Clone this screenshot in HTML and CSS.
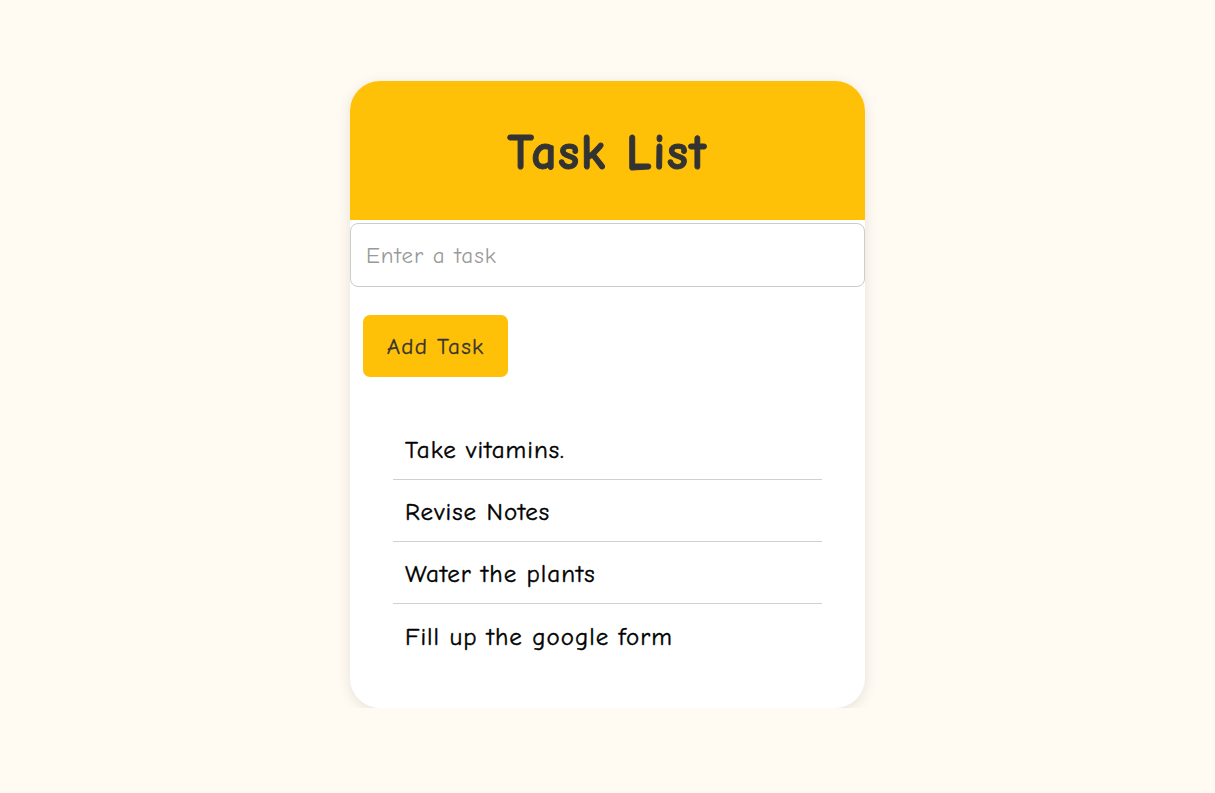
FILE: index.html
```html
<!DOCTYPE html>
<html lang="en">
<head>
<meta charset="utf-8">
<title>Task List</title>
<link rel="stylesheet" href="styles.css">
</head>
<body>
<div class="card">
  <header class="card-header">
    <h1 class="title">Task List</h1>
  </header>
  <input class="task-input" type="text" placeholder="Enter a task">
  <div class="actions">
    <button class="add-btn" type="button">Add Task</button>
  </div>
  <ul class="task-list">
    <li class="task">Take vitamins.</li>
    <li class="task">Revise Notes</li>
    <li class="task">Water the plants</li>
    <li class="task">Fill up the google form</li>
  </ul>
</div>
</body>
</html>
```

FILE: styles.css
```css
html, body {
  margin: 0;
  padding: 0;
}
body {
  background: #fffaf2;
  font-family: "Comic Sans MS", "Comic Neue", "Open Sans", sans-serif;
  padding-top: 81px;
}
.card {
  width: 515px;
  margin: 0 auto;
  background: #ffffff;
  border-radius: 30px;
  box-shadow: 0 3px 14px rgba(0, 0, 0, 0.1);
  overflow: hidden;
  padding-bottom: 42px;
}
.card-header {
  background: #ffc107;
  height: 139px;
  display: flex;
  align-items: center;
  justify-content: center;
}
.title {
  margin: 4px 0 0 0;
  font-size: 50px;
  font-weight: 700;
  color: #333333;
  letter-spacing: 1.5px;
  -webkit-text-stroke: 1px #333333;
}
.task-input {
  display: block;
  box-sizing: border-box;
  width: 100%;
  height: 64px;
  margin: 3px 0 0 0;
  padding: 0 15px;
  border: 1px solid #cccccc;
  border-radius: 8px;
  font-family: inherit;
  font-size: 23px;
  letter-spacing: 1px;
  color: #333333;
  outline: none;
}
.task-input::placeholder {
  color: #999999;
}
.actions {
  padding: 28px 13px 0;
}
.add-btn {
  width: 145px;
  height: 62px;
  padding: 0;
  border: none;
  border-radius: 7px;
  background: #ffc107;
  color: #333333;
  font-family: inherit;
  font-size: 23px;
  letter-spacing: 1.2px;
  -webkit-text-stroke: 0.3px #333333;
  cursor: pointer;
}
.task-list {
  list-style: none;
  margin: 41px 43px 0;
  padding: 0;
}
.task {
  height: 62px;
  box-sizing: border-box;
  display: flex;
  align-items: center;
  padding: 2px 12px 0;
  font-size: 25px;
  letter-spacing: 1px;
  color: #000000;
  -webkit-text-stroke: 0.4px #000000;
  border-bottom: 1px solid #d0d0d0;
}
.task:last-child {
  border-bottom: none;
}
```
